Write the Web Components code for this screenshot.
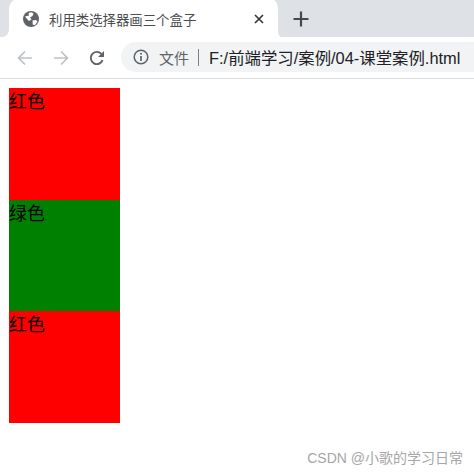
<!DOCTYPE html>
<html lang="zh">
<head>
<meta charset="utf-8">
<title>利用类选择器画三个盒子</title>
<style>
  html, body { margin: 0; height: 100%; background: #fff; }
  body { font-family: "Liberation Sans", "Noto Sans CJK SC", sans-serif; }
</style>
</head>
<body>
<browser-window>
  <browser-tab slot="tabs">利用类选择器画三个盒子</browser-tab>
  <browser-toolbar slot="toolbar" scheme="文件" url="F:/前端学习/案例/04-课堂案例.html"></browser-toolbar>
  <color-box color="#ff0000">红色</color-box>
  <color-box color="#008000">绿色</color-box>
  <color-box color="#ff0000">红色</color-box>
  <water-mark slot="overlay">CSDN @小歌的学习日常</water-mark>
</browser-window>

<script>
class BrowserWindow extends HTMLElement {
    constructor() {
        super();
        this.attachShadow({ mode: "open" });
    }

    connectedCallback() {
        this.shadowRoot.innerHTML = `
            <style>
                :host {
                    display: flex;
                    flex-direction: column;
                    position: relative;
                    width: 474px;
                    height: 473px;
                    overflow: hidden;
                }
                .page {
                    display: flex;
                    flex-direction: column;
                    padding: 9px 9px 0;
                }
            </style>
            <slot name="tabs"></slot>
            <slot name="toolbar"></slot>
            <div class="page"><slot></slot></div>
            <slot name="overlay"></slot>
        `;
    }
}

class BrowserTab extends HTMLElement {
    constructor() {
        super();
        this.attachShadow({ mode: "open" });
    }

    connectedCallback() {
        this.shadowRoot.innerHTML = `
            <style>
                :host {
                    display: flex;
                    height: 38px;
                    background: #fff;
                    font-size: 13.4px;
                    color: #4a4d50;
                }
                svg { display: block; flex: none; }
                .tab {
                    display: flex;
                    align-items: center;
                    width: 260px;
                    height: 38px;
                    padding-left: 8px;
                    box-sizing: border-box;
                }
                .globe { margin-right: 9px; }
                .title { flex: 1; white-space: nowrap; }
                .close { margin-right: 9px; }
                .rest {
                    flex: 1;
                    display: flex;
                    align-items: center;
                    height: 37px;
                    background: #dee1e6;
                    padding-left: 2px;
                }
            </style>
            <svg width="14" height="38" viewBox="0 0 14 38"><path fill="#dee1e6" d="M0 0H14C11 2 9 5 9 10V29C9 34 6 37 2 37H0Z"/></svg>
            <div class="tab">
                <svg class="globe" width="18" height="18" viewBox="0 0 18 18">
                    <circle cx="9" cy="9" r="8" fill="#5f6368"/>
                    <path fill="#fff" d="M3 6.5 7 5.5 6.5 3 9.5 2.2 11.5 3.5 10.5 6 8 7.5 9.5 9.5 7 11 5.5 9.5ZM10.5 10.5 14 10 15.5 11.5 13 15 10.8 14.8Z"/>
                </svg>
                <span class="title"><slot></slot></span>
                <svg class="close" width="12" height="12" viewBox="0 0 12 12"><path d="M2 2 10 10M10 2 2 10" stroke="#33363a" stroke-width="1.7" fill="none"/></svg>
            </div>
            <svg width="8" height="37" viewBox="0 0 8 37"><path fill="#dee1e6" d="M0 0C3 2 4 5 4 10V31C4 35 6 37 8 37V0Z"/></svg>
            <div class="rest">
                <svg width="34" height="18" viewBox="0 0 34 18"><path d="M17 1.5V16.5M9.5 9H24.5" stroke="#45484c" stroke-width="2.2" fill="none"/></svg>
            </div>
        `;
    }
}

class BrowserToolbar extends HTMLElement {
    constructor() {
        super();
        this.attachShadow({ mode: "open" });
    }

    connectedCallback() {
        this.shadowRoot.innerHTML = `
            <style>
                :host {
                    display: flex;
                    align-items: center;
                    height: 41px;
                    padding-left: 16px;
                    box-sizing: border-box;
                    background: #fff;
                    border-bottom: 1px solid #d9dbde;
                    flex: none;
                }
                svg { display: block; flex: none; }
                .nav { display: flex; align-items: center; gap: 18px; margin-right: 15px; }
                .omnibox {
                    flex: 1;
                    display: flex;
                    align-items: center;
                    height: 30px;
                    margin-bottom: 2px;
                    background: #f1f3f4;
                    border-radius: 15px 0 0 15px;
                    padding-left: 12px;
                    white-space: nowrap;
                }
                .scheme { margin-left: 10px; font-size: 15px; color: #5f6368; }
                .sep { width: 1px; height: 17px; background: #7d8084; margin: 0 10px 0 9px; }
                .url { font-size: 16.4px; color: #202124; }
            </style>
            <div class="nav">
                <svg width="18" height="18" viewBox="0 0 18 18"><path d="M16 9H2.5M9 2.5 2.5 9 9 15.5" stroke="#bdc1c6" stroke-width="1.7" fill="none"/></svg>
                <svg width="18" height="18" viewBox="0 0 18 18"><path d="M2 9H15.5M9 2.5 15.5 9 9 15.5" stroke="#bdc1c6" stroke-width="1.7" fill="none"/></svg>
                <svg width="18" height="18" viewBox="0 0 18 18"><path d="M14.6 11.2A6.1 6.1 0 1 1 13.4 4.9" stroke="#5f6368" stroke-width="1.9" fill="none"/><path d="M16 2V8H10Z" fill="#5f6368"/></svg>
            </div>
            <div class="omnibox">
                <svg width="16" height="16" viewBox="0 0 16 16">
                    <circle cx="8" cy="8" r="6.8" stroke="#5f6368" stroke-width="1.5" fill="none"/>
                    <path d="M8 7V12" stroke="#5f6368" stroke-width="1.7"/>
                    <circle cx="8" cy="4.8" r="1" fill="#5f6368"/>
                </svg>
                <span class="scheme">${this.getAttribute("scheme")}</span>
                <span class="sep"></span>
                <span class="url">${this.getAttribute("url")}</span>
            </div>
        `;
    }
}

class ColorBox extends HTMLElement {
    constructor() {
        super();
        this.attachShadow({ mode: "open" });
    }

    connectedCallback() {
        this.shadowRoot.innerHTML = `
            <style>
                :host {
                    display: block;
                    width: 111px;
                    height: 111.6px;
                    font-size: 18px;
                    line-height: 28px;
                    color: #000;
                    background: ${this.getAttribute("color")};
                }
            </style>
            <slot></slot>
        `;
    }
}

class WaterMark extends HTMLElement {
    constructor() {
        super();
        this.attachShadow({ mode: "open" });
    }

    connectedCallback() {
        this.shadowRoot.innerHTML = `
            <style>
                :host {
                    position: absolute;
                    right: 11px;
                    bottom: 6px;
                    font-size: 14px;
                    line-height: 18px;
                    color: #a6a6a6;
                    white-space: nowrap;
                }
            </style>
            <slot></slot>
        `;
    }
}

customElements.define("browser-window", BrowserWindow);
customElements.define("browser-tab", BrowserTab);
customElements.define("browser-toolbar", BrowserToolbar);
customElements.define("color-box", ColorBox);
customElements.define("water-mark", WaterMark);
</script>
</body>
</html>
